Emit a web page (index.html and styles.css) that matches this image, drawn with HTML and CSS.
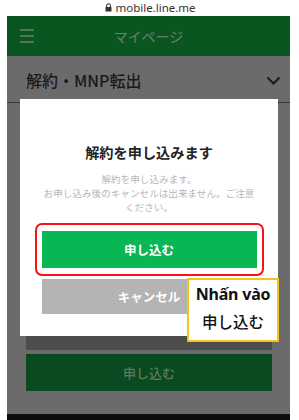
FILE: index.html
```html
<!DOCTYPE html>
<html lang="ja">
<head>
<meta charset="utf-8">
<link rel="stylesheet" href="styles.css">
</head>
<body>
<div class="addr">
  <svg class="lock" width="7" height="9" viewBox="0 0 7 9"><path d="M1.6 4V2.7a1.9 1.9 0 0 1 3.8 0V4" fill="none" stroke="#333" stroke-width="1.1"/><rect x="0.5" y="4" width="6" height="4.6" rx="0.6" fill="#333"/></svg>
  <span>mobile.line.me</span>
</div>
<div class="screen">
  <header class="topbar">
    <span class="burger"><i></i><i></i><i></i></span>
    <h1>マイページ</h1>
  </header>
  <div class="page">
    <div class="sec-head">
      <h2>解約・MNP転出</h2>
      <svg class="chev" width="15" height="9" viewBox="0 0 15 9"><path d="M1.5 1.5l6 6 6-6" fill="none" stroke="#1a1a1a" stroke-width="2"/></svg>
    </div>
    <div class="page-foot">
      <div class="under-cancel"></div>
      <div class="under-submit">申し込む</div>
    </div>
  </div>
  <div class="footbar"></div>

  <div class="modal">
    <h3>解約を申し込みます</h3>
    <p class="desc">解約を申し込みます。<br>お申し込み後のキャンセルは出来ません。ご注意ください。</p>
    <div class="highlight"><button class="btn-ok">申し込む</button></div>
    <button class="btn-cancel">キャンセル</button>
  </div>

  <div class="callout"><b>Nhấn vào</b><span>申し込む</span></div>
</div>
</body>
</html>
```
FILE: styles.css
```css
* { box-sizing: border-box; }
html, body { margin: 0; padding: 0; }
body {
  width: 299px;
  height: 420px;
  background: #fff;
  font-family: "Noto Sans", "Noto Sans CJK JP", sans-serif;
  overflow: hidden;
}
.addr {
  height: 16px;
  display: flex;
  align-items: flex-start;
  justify-content: center;
  gap: 3px;
  font-size: 11.5px;
  color: #333;
  padding: 0 0 0 2px;
}
.addr span { line-height: normal; }
.lock { margin-top: 3px; }
.screen {
  position: relative;
  margin-left: 7px;
  width: 283px;
  height: 404px;
  display: flex;
  flex-direction: column;
}
.topbar {
  height: 40px;
  flex: none;
  background: #0a5621;
  display: flex;
  align-items: center;
  justify-content: center;
  position: relative;
}
.burger {
  position: absolute;
  left: 13px;
  top: 13px;
  width: 14px;
  display: flex;
  flex-direction: column;
  gap: 4px;
}
.burger i { display: block; height: 2px; background: #56735c; }
.topbar h1 {
  margin: 0;
  font-size: 14px;
  font-weight: 400;
  color: #6f7d71;
  font-family: "Noto Sans CJK JP", sans-serif;
}
.page {
  flex: 1;
  background: #6b6b6b;
  display: flex;
  flex-direction: column;
}
.sec-head {
  height: 47px;
  border-bottom: 1px solid #3b3b3b;
  display: flex;
  align-items: center;
  justify-content: space-between;
  padding: 0 9px 0 19px;
}
.sec-head h2 {
  margin: 0;
  font-size: 16px;
  font-weight: 500;
  color: #1a1a1a;
  font-family: "Noto Sans CJK JP", sans-serif;
  margin-top: 2px;
}
.chev { margin-top: 3px; }
.page-foot {
  margin-top: auto;
  padding: 0 18px 23px 19px;
}
.under-cancel { height: 14px; background: #4d4d4d; margin-bottom: 4px; }
.under-submit {
  height: 37px;
  background: #0b4a21;
  display: flex;
  align-items: center;
  justify-content: center;
  color: #587a60;
  font-size: 13px;
  font-weight: 500;
  font-family: "Noto Sans CJK JP", sans-serif;
}
.footbar { height: 6px; flex: none; background: #0d0d0d; }

.modal {
  position: absolute;
  left: 13px;
  top: 83px;
  width: 258px;
  height: 237px;
  background: #fff;
  padding-top: 43px;
  display: flex;
  flex-direction: column;
  align-items: center;
  font-family: "Noto Sans CJK JP", sans-serif;
}
.modal h3 {
  margin: 0;
  font-size: 14.2px;
  line-height: 20px;
  font-weight: 700;
  color: #222;
}
.desc {
  margin: 10px 0 0;
  width: 215px;
  font-size: 9.6px;
  line-height: 14px;
  color: #b7b7b7;
  text-align: center;
}
.highlight {
  margin-top: 9px;
  width: 229px;
  border: 2px solid #f5121b;
  border-radius: 7px;
  padding: 6px 5px;
}
button {
  font-family: "Noto Sans CJK JP", sans-serif;
  border: 0;
  display: block;
  width: 215px;
  color: #fff;
  font-size: 12.5px;
  font-weight: 700;
  padding: 0;
}
.btn-ok { height: 37px; background: #08b654; }
.btn-cancel { margin-top: 3px; height: 35px; background: #b4b4b4; }

.callout {
  position: absolute;
  left: 180px;
  top: 262px;
  width: 92px;
  height: 64px;
  background: #fff;
  border: 2px solid #f7c21b;
  display: flex;
  flex-direction: column;
  align-items: center;
  padding-top: 1px;
  color: #111;
}
.callout b {
  font-family: "Noto Sans", sans-serif;
  font-size: 16px;
  line-height: 27px;
  font-weight: 700;
  letter-spacing: -0.2px;
}
.callout span {
  font-family: "Noto Sans CJK JP", sans-serif;
  font-size: 15.5px;
  line-height: 27px;
  font-weight: 500;
}
```
